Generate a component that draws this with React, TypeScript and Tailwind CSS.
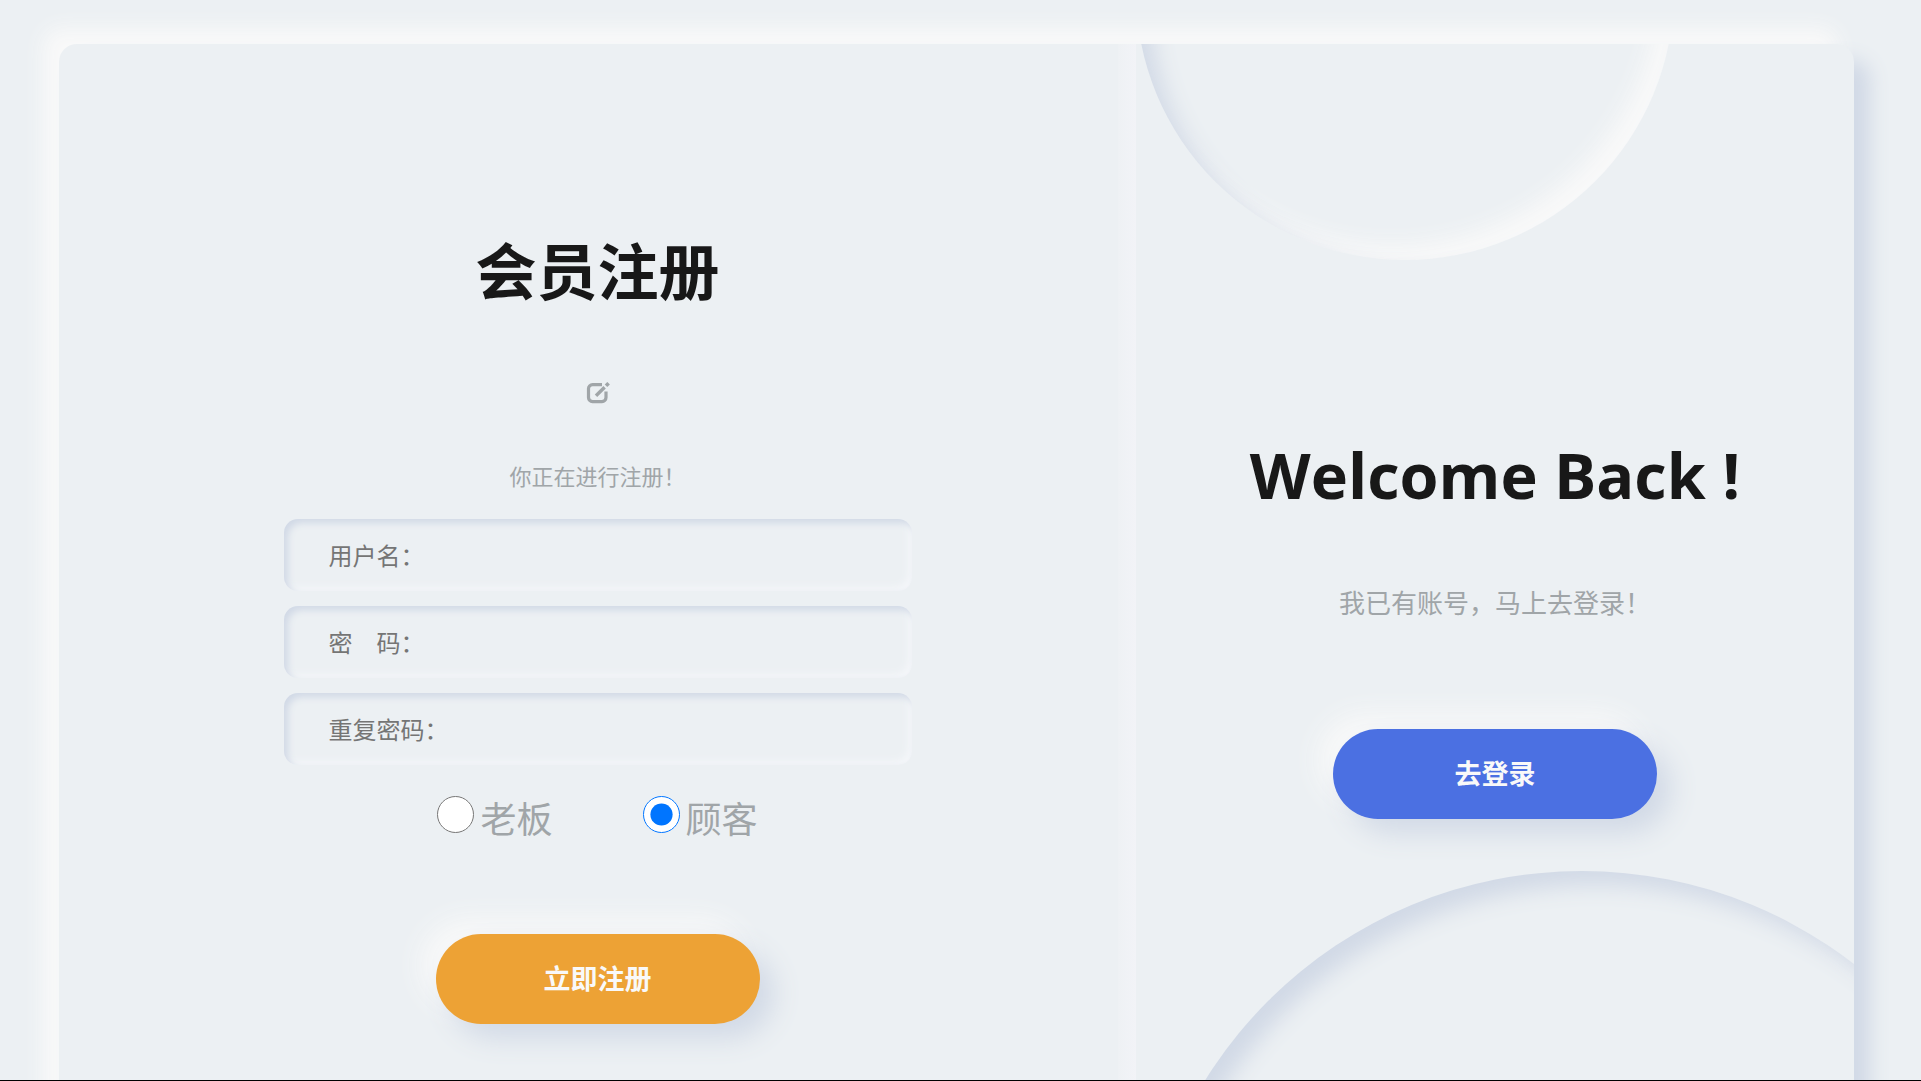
import { useState } from "react";

const fields = [
  { id: "username", type: "text", label: "用户名：" },
  { id: "password", type: "password", label: "密　码：" },
  { id: "confirm", type: "password", label: "重复密码：" },
];

const roles = [
  { id: "boss", label: "老板" },
  { id: "customer", label: "顾客" },
];

function EditIcon() {
  return (
    <svg viewBox="0 0 24 22" className="h-[22px] w-6" fill="none" stroke="currentColor" aria-hidden="true">
      <path d="M16 2.600H6.500a4 4 0 0 0-4 4v9a4 4 0 0 0 4 4h9.500a4 4 0 0 0 4-4V9.500" strokeWidth="3.200" />
      <path d="M10 13.800 18.600 5.200" strokeWidth="3.400" />
      <path d="M20 3.800 22.600 1.200" strokeWidth="3.600" />
    </svg>
  );
}

function PillButton({ label, tone }: { label: string; tone: string }) {
  return (
    <button
      type="button"
      className={`h-[90px] w-[324px] rounded-full text-[27px] font-bold text-[#f9f9f9] shadow-[14px_14px_28px_#d1d9e6,-14px_-14px_28px_#f9f9f9] ${tone}`}
    >
      {label}
    </button>
  );
}

function RegisterForm() {
  const [role, setRole] = useState("customer");
  return (
    <form className="flex min-w-0 flex-[3] flex-col items-center pt-[196px]">
      <h2 className="text-[61px] leading-[64px] font-bold text-[#181818]">会员注册</h2>
      <div className="mt-[78px]">
        <EditIcon />
      </div>
      <p className="mt-14 text-[22px] leading-8">你正在进行注册！</p>
      <div className="mt-[27px] flex w-[628px] flex-col gap-[15px]">
        {fields.map((f) => (
          <input
            key={f.id}
            id={f.id}
            type={f.type}
            aria-label={f.label}
            placeholder={f.label}
            className="h-[72px] w-full rounded-[14px] pr-6 pl-[45px] text-2xl text-[#181818] shadow-[inset_4px_4px_7px_#d1d9e6,inset_-4px_-4px_7px_#f4f6f9] outline-none placeholder:text-[#757575]"
          />
        ))}
      </div>
      <div className="mt-[31px] flex gap-[90px]">
        {roles.map((r) => (
          <div key={r.id} className="flex items-start gap-[6px]">
            <input
              id={r.id}
              type="radio"
              name="role"
              checked={role === r.id}
              onChange={() => setRole(r.id)}
              className="size-[37px] accent-[#0075ff]"
            />
            <label htmlFor={r.id} className="text-4xl leading-[48px]">
              {r.label}
            </label>
          </div>
        ))}
      </div>
      <div className="mt-[90px] pb-28">
        <PillButton label="立即注册" tone="bg-[#eda235]" />
      </div>
    </form>
  );
}

function WelcomePanel() {
  return (
    <section className="relative flex min-w-0 flex-[2] flex-col items-center overflow-hidden pt-[399px]">
      <div className="absolute -top-[322px] left-0 size-[538px] rounded-full shadow-[inset_14px_14px_22px_#d1d9e6,inset_-14px_-14px_22px_#f9f9f9]" />
      <div className="absolute top-[827px] -right-[172px] size-[888px] rounded-full shadow-[inset_14px_14px_22px_#d1d9e6,inset_-14px_-14px_22px_#f9f9f9]" />
      <h2 className="relative text-[63px] leading-[64px] font-bold whitespace-nowrap text-[#181818]">Welcome Back !</h2>
      <p className="relative mt-20 text-[26px] leading-8">我已有账号，马上去登录！</p>
      <div className="relative mt-[110px]">
        <PillButton label="去登录" tone="bg-[#4b70e2]" />
      </div>
    </section>
  );
}

export default function App() {
  return (
    <div className="flex min-h-screen flex-col overflow-hidden border-b border-black bg-[#ecf0f3] pt-11 pr-[67px] pl-[59px] font-['Open_Sans','Noto_Sans_CJK_SC',sans-serif] text-[#a0a5a8]">
      <main className="-mb-16 flex grow rounded-[18px] shadow-[16px_16px_20px_#d1d9e6,-16px_-16px_20px_#f9f9f9]">
        <RegisterForm />
        <div className="-ml-[18px] w-[18px] bg-linear-to-r from-[#eef1f4] to-[#f2f3f7]" />
        <WelcomePanel />
      </main>
    </div>
  );
}
